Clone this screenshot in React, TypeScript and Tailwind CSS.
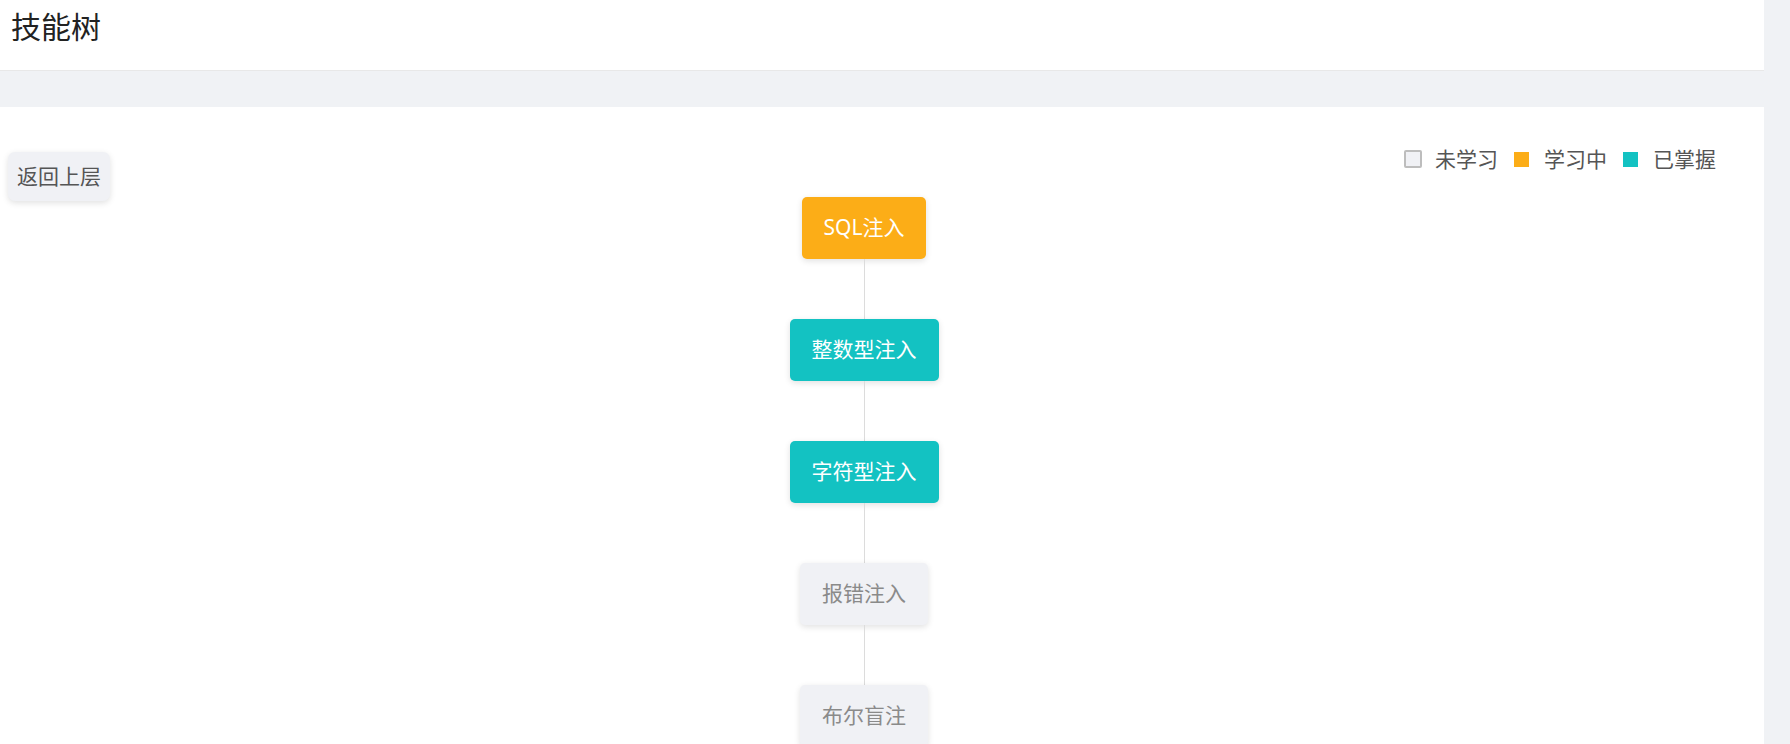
// 技能树页面：顶部标题栏 + 技能节点竖向链条 + 图例
type Status = "todo" | "learning" | "done";

const nodes: { label: string; status: Status }[] = [
  { label: "SQL注入", status: "learning" },
  { label: "整数型注入", status: "done" },
  { label: "字符型注入", status: "done" },
  { label: "报错注入", status: "todo" },
  { label: "布尔盲注", status: "todo" },
];

const nodeClass: Record<Status, string> = {
  learning: "bg-[#fcad17] text-white",
  done: "bg-[#13c2c2] text-white",
  todo: "bg-[#f0f1f5] text-[#8a8a8a]",
};

const font = { fontFamily: '"Noto Sans", "Noto Sans CJK SC", sans-serif' };

function Legend() {
  return (
    <div className="flex items-center whitespace-nowrap text-[21px] leading-[28px] text-[#555]">
      <span className="h-[18px] w-[18px] shrink-0 rounded-[2px] border-2 border-[#bdbdbd] bg-[#f0f1f5]" />
      <span className="ml-[13px]">未学习</span>
      <span className="ml-[16px] h-[15px] w-[15px] shrink-0 bg-[#fcad17]" />
      <span className="ml-[15px]">学习中</span>
      <span className="ml-[16px] h-[15px] w-[15px] shrink-0 bg-[#13c2c2]" />
      <span className="ml-[15px]">已掌握</span>
    </div>
  );
}

export default function App() {
  return (
    <div className="flex h-[744px] w-full flex-col overflow-hidden bg-[#f0f2f5] pr-[26px]" style={font}>
      <header className="h-[71px] shrink-0 border-b border-[#e8e8e8] bg-white pl-[11px] pt-[11px]">
        <h1 className="text-[30px] leading-[32px] text-[#222]">技能树</h1>
      </header>

      <main className="mt-[36px] flex flex-1 bg-white">
        <div className="w-[323px] shrink-0 pl-[8px] pt-[45px]">
          <button className="h-[49px] w-[102px] rounded-[7px] bg-[#f0f1f5] text-[21px] text-[#555] shadow-[0_2px_6px_rgba(0,0,0,0.12)]">
            返回上层
          </button>
        </div>

        <div className="flex flex-1 flex-col items-center pt-[90px]">
          {nodes.map((n, i) => (
            <div key={n.label} className="flex flex-col items-center">
              {i > 0 && <div className="h-[60px] w-px bg-[#dcdcdc]" />}
              <div
                className={`flex h-[62px] items-center whitespace-nowrap rounded-[5px] px-[22px] text-[21px] shadow-[0_2px_6px_rgba(0,0,0,0.12)] ${nodeClass[n.status]}`}
              >
                {n.label}
              </div>
            </div>
          ))}
        </div>

        <div className="flex w-[359px] shrink-0 justify-end pr-[48px] pt-[38px]">
          <div className="h-fit shrink-0">
            <Legend />
          </div>
        </div>
      </main>
    </div>
  );
}
